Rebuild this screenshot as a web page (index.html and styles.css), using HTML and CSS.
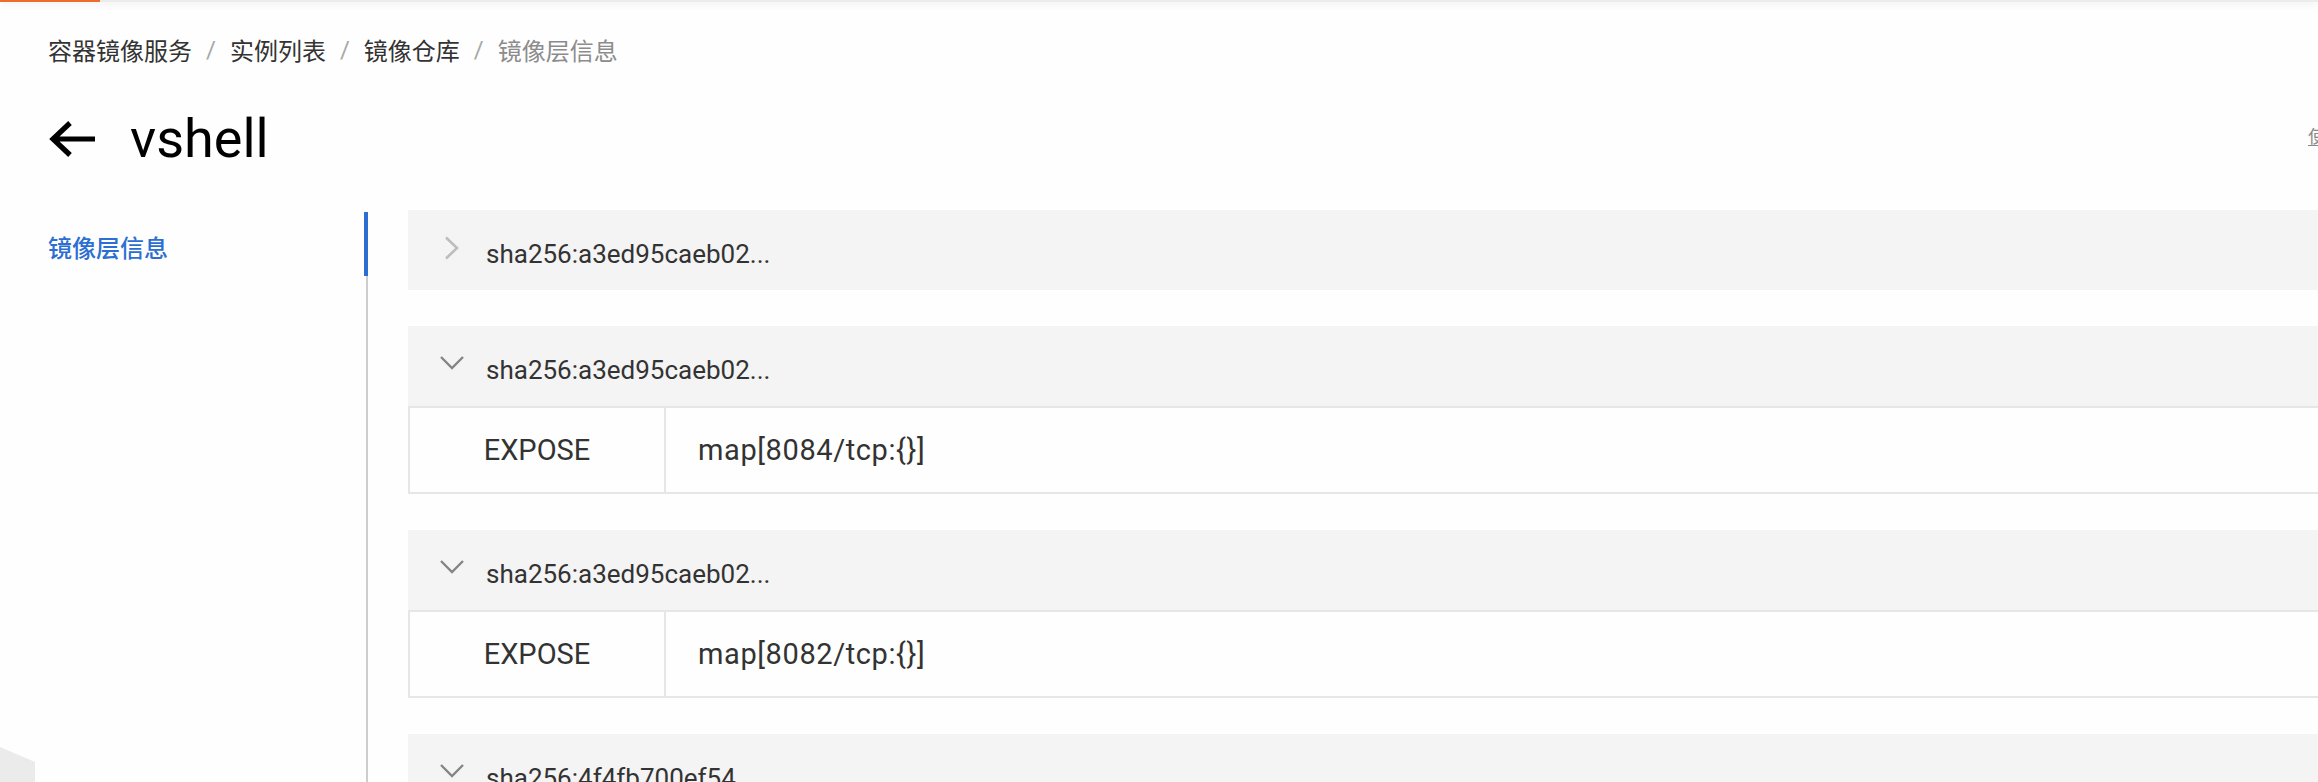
FILE: index.html
```html
<!DOCTYPE html>
<html lang="zh-CN">
<head>
<meta charset="utf-8">
<title>镜像层信息 - vshell</title>
<link rel="stylesheet" href="styles.css">
</head>
<body>
<div class="topbar"><span class="topbar-accent"></span></div>
<div class="page">
  <nav class="breadcrumb">
    <span class="crumb">容器镜像服务</span><span class="sep">/</span>
    <span class="crumb">实例列表</span><span class="sep">/</span>
    <span class="crumb">镜像仓库</span><span class="sep">/</span>
    <span class="crumb current">镜像层信息</span>
  </nav>
  <header class="title-row">
    <svg class="back" width="48" height="36" viewBox="0 0 48 36" aria-hidden="true">
      <path d="M47 18 H5 M22 2 L5 18 L22 34" fill="none" stroke="#000" stroke-width="5.2"/>
    </svg>
    <h1 class="title">vshell</h1>
    <a class="help-link">使用指南</a>
  </header>
  <div class="main">
    <aside class="sidebar">
      <div class="side-item active">镜像层信息</div>
    </aside>
    <section class="layers">
      <div class="layer">
        <div class="layer-head">
          <svg class="chev chev-right" width="24" height="24" viewBox="0 0 24 24" aria-hidden="true"><path d="M6 1.5 L17 12 L6 22.5" fill="none" stroke="#bdbdbd" stroke-width="2.6"/></svg>
          <span class="digest">sha256:a3ed95caeb02...</span>
        </div>
      </div>
      <div class="layer">
        <div class="layer-head">
          <svg class="chev" width="24" height="24" viewBox="0 0 24 24" aria-hidden="true"><path d="M1 5 L12 16 L23 5" fill="none" stroke="#858585" stroke-width="2.4"/></svg>
          <span class="digest">sha256:a3ed95caeb02...</span>
        </div>
        <div class="kv">
          <div class="kv-key">EXPOSE</div>
          <div class="kv-val">map[8084/tcp:{}]</div>
        </div>
      </div>
      <div class="layer">
        <div class="layer-head">
          <svg class="chev" width="24" height="24" viewBox="0 0 24 24" aria-hidden="true"><path d="M1 5 L12 16 L23 5" fill="none" stroke="#858585" stroke-width="2.4"/></svg>
          <span class="digest">sha256:a3ed95caeb02...</span>
        </div>
        <div class="kv">
          <div class="kv-key">EXPOSE</div>
          <div class="kv-val">map[8082/tcp:{}]</div>
        </div>
      </div>
      <div class="layer">
        <div class="layer-head">
          <svg class="chev" width="24" height="24" viewBox="0 0 24 24" aria-hidden="true"><path d="M1 5 L12 16 L23 5" fill="none" stroke="#858585" stroke-width="2.4"/></svg>
          <span class="digest">sha256:4f4fb700ef54...</span>
        </div>
        <div class="kv">
          <div class="kv-key">EXPOSE</div>
          <div class="kv-val">map[8080/tcp:{}]</div>
        </div>
      </div>
    </section>
  </div>
</div>
<div class="float-widget"></div>
</body>
</html>
```

FILE: styles.css
```css
html, body {
  margin: 0;
  padding: 0;
  overflow: hidden;
  background: #fefefe;
}

body {
  font-family: Roboto, "Noto Sans CJK SC", sans-serif;
  color: #333;
}

.topbar {
  height: 2px;
  background: #ececec;
  box-shadow: 0 2px 7px rgba(0, 0, 0, 0.12);
  position: relative;
  z-index: 2;
}

.topbar-accent {
  display: block;
  width: 100px;
  height: 2px;
  background: #ef6b2c;
}

.page {
  width: 2332px;
  padding-left: 48px;
}

.breadcrumb {
  display: flex;
  align-items: center;
  margin-top: 36px;
  height: 24px;
  font-size: 24px;
  line-height: 24px;
  font-family: "Noto Sans CJK SC", Roboto, sans-serif;
}

.crumb {
  color: #333;
}

.crumb.current {
  color: #8c8c8c;
}

.sep {
  font-family: Roboto, sans-serif;
  color: #a8a8a8;
  margin: 0 14px;
}

.title-row {
  display: flex;
  align-items: center;
  height: 56px;
  margin-top: 49px;
}

.back {
  flex: none;
  margin-right: 34px;
}

.title {
  margin: 0;
  font-family: Roboto, sans-serif;
  font-weight: 400;
  font-size: 54px;
  line-height: 56px;
  color: #000;
}

.help-link {
  margin-left: auto;
  margin-bottom: 8px;
  font-family: "Noto Sans CJK SC", sans-serif;
  font-size: 18px;
  line-height: 18px;
  color: #888;
  text-decoration: underline;
  text-underline-offset: 2px;
}

.main {
  display: flex;
  margin-top: 43px;
}

.sidebar {
  flex: none;
  width: 320px;
  box-sizing: border-box;
  margin-top: 2px;
  border-right: 2px solid #cdcdcd;
}

.side-item {
  position: relative;
  height: 64px;
  box-sizing: border-box;
  padding-top: 5px;
  display: flex;
  align-items: center;
  font-family: "Noto Sans CJK SC", sans-serif;
  font-size: 24px;
  line-height: 24px;
  font-weight: 500;
  color: #2c6ed1;
}

.side-item.active::after {
  content: "";
  position: absolute;
  top: 0;
  bottom: 0;
  right: -2px;
  width: 4px;
  background: #2c6ed1;
}

.layers {
  flex: 1;
  margin-left: 40px;
}

.layer {
  margin-bottom: 36px;
}

.layer-head {
  display: flex;
  align-items: flex-start;
  height: 80px;
  box-sizing: border-box;
  padding: 31px 0 0 32px;
  background: #f4f4f4;
}

.chev {
  flex: none;
  margin-top: -5px;
  margin-right: 22px;
}

.digest {
  font-family: Roboto, sans-serif;
  font-size: 26px;
  line-height: 26px;
  color: #333;
}

.kv {
  display: grid;
  grid-template-columns: 256px 1fr;
  border: 2px solid #e6e6e6;
  border-right: none;
}

.kv-key,
.kv-val {
  height: 84px;
  display: flex;
  align-items: center;
  font-family: Roboto, sans-serif;
  font-size: 29px;
  color: #333;
}

.kv-key {
  justify-content: center;
  border-right: 2px solid #e6e6e6;
}

.kv-val {
  padding-left: 32px;
  letter-spacing: 0.6px;
}

.float-widget {
  position: fixed;
  left: 0;
  bottom: 0;
  width: 35px;
  height: 35px;
  background: #ebebeb;
  clip-path: polygon(0 0, 100% 43%, 100% 100%, 0 100%);
}
```
